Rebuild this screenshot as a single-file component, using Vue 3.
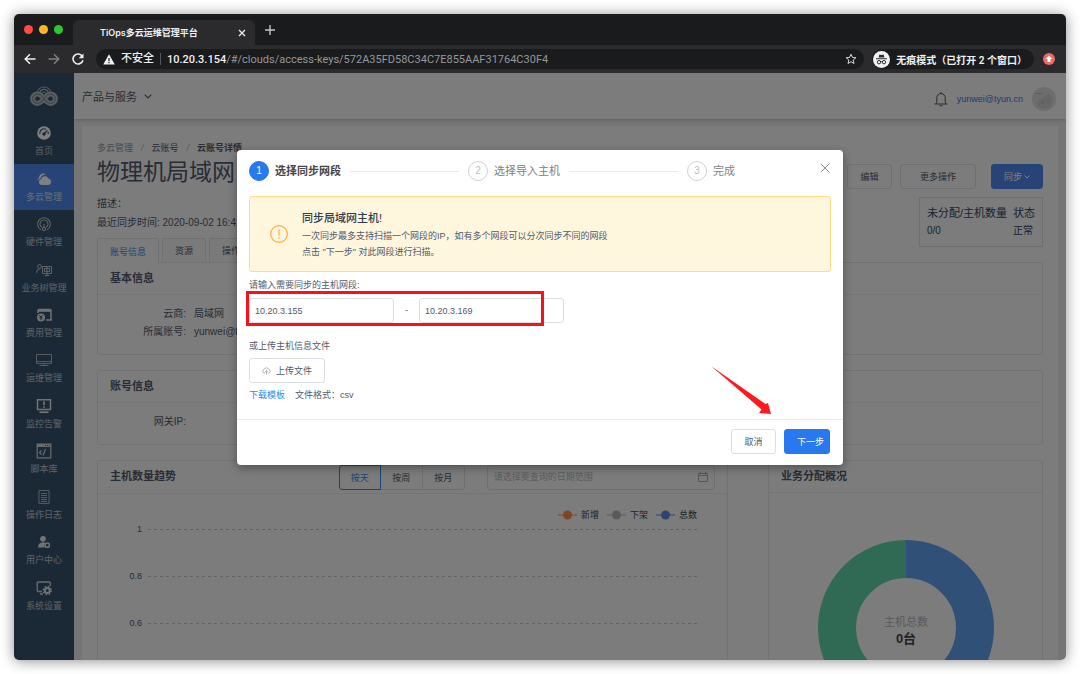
<template>
    <div class="desktop">
        <div class="window">
            <div class="tab-strip">
                <div class="lights">
                    <span class="light red"></span>
                    <span class="light yellow"></span>
                    <span class="light green"></span>
                </div>
                <div class="browser-tab">
                    <span class="tab-title">TiOps多云运维管理平台</span>
                    <button class="plain" aria-label="关闭标签页">
                        <svg width="8" height="8" viewBox="0 0 8 8"><path d="M1 1l6 6M7 1L1 7" stroke="#e8e8ea" stroke-width="1.4" /></svg>
                    </button>
                </div>
                <button class="plain" aria-label="新标签页">
                    <svg width="10" height="10" viewBox="0 0 10 10"><path d="M5 0v10M0 5h10" stroke="#c4c5c8" stroke-width="1.4" /></svg>
                </button>
            </div>
            <div class="toolbar">
                <div class="nav-buttons">
                    <button class="plain" aria-label="后退">
                        <svg width="12" height="12" viewBox="0 0 12 12"><path d="M11.5 6H1.5M6 1.2L1.2 6 6 10.8" fill="none" stroke="#f0f0f2" stroke-width="1.5" /></svg>
                    </button>
                    <button class="plain" aria-label="前进">
                        <svg width="12" height="12" viewBox="0 0 12 12"><path d="M.5 6h10M6 1.2L10.8 6 6 10.8" fill="none" stroke="#7d7e82" stroke-width="1.5" /></svg>
                    </button>
                    <button class="plain" aria-label="重新加载">
                        <svg width="12" height="12" viewBox="0 0 12 12"><path d="M10.2 3.2A5 5 0 1 0 10.9 7.2" fill="none" stroke="#f0f0f2" stroke-width="1.6" /><path d="M11.5.5v4.8H6.7z" fill="#f0f0f2" /></svg>
                    </button>
                </div>
                <div class="omnibox">
                    <svg width="12" height="11" viewBox="0 0 12 11"><path d="M6 .3L11.8 10.6H.2z" fill="#f0f0f2" /><path d="M6 4v3.2M6 8v1.3" stroke="#1a1b1d" stroke-width="1.2" /></svg>
                    <span class="unsafe">不安全</span>
                    <span class="url"><b>10.20.3.154</b>/#/clouds/access-keys/572A35FD58C34C7E855AAF31764C30F4</span>
                    <button class="plain" aria-label="收藏">
                        <svg width="12" height="12" viewBox="0 0 12 12"><path d="M6 1.2l1.4 3.2 3.5.3-2.7 2.3.8 3.5L6 8.7l-3 1.8.8-3.5L1.1 4.7l3.5-.3z" fill="none" stroke="#d5d6d9" stroke-width="1" /></svg>
                    </button>
                </div>
                <div class="incognito">
                    <svg width="17" height="17" viewBox="0 0 17 17">
                        <circle cx="8.5" cy="8.5" r="8.5" fill="#f1f3f4" />
                        <path d="M5.6 6.6l.8-3.2 2.1.5 2.1-.5.8 3.2zM3 7.2h11v1H3z" fill="#2b2c2f" />
                        <g fill="none" stroke="#2b2c2f"><circle cx="6" cy="11.2" r="1.7" /><circle cx="11" cy="11.2" r="1.7" /><path d="M7.7 10.9q.8-.6 1.6 0" /></g>
                    </svg>
                    <span>无痕模式（已打开 2 个窗口）</span>
                </div>
                <button class="plain" aria-label="更新">
                    <svg width="12" height="12" viewBox="0 0 12 12"><circle cx="6" cy="6" r="6" fill="#ed6a63" /><path d="M6 2.5l3.3 3.4H7.5v3h-3v-3H2.7z" fill="#fff" /></svg>
                </button>
            </div>

            <div class="app">
                <aside class="sidebar">
                    <a class="logo" href="#" aria-label="TiOps">
                        <svg width="28" height="20" viewBox="0 0 28 20" fill="none" stroke="#b4bbc1">
                            <path d="M7.5 6.500C8 3 11 1 14 1s6 2 6.500 5.500" stroke-width="1.2" />
                            <path d="M9.700 6.800C10.200 4.500 12 3.300 14 3.300s3.800 1.200 4.300 3.500" stroke-width="1.2" />
                            <path d="M11.800 7.500Q14 4.500 16.200 7.500" stroke-width="1.2" />
                            <path d="M14 12.500C11.500 9.500 9.700 8 7.300 8a4.700 4.700 0 1 0 0 9.400c5.400 0 8-9.400 13.400-9.400a4.700 4.700 0 1 1 0 9.400C18.300 17.400 16.500 15.900 14 12.900" stroke-width="5" />
                            <path d="M14 12.500C11.500 9.500 9.700 8 7.300 8a4.700 4.700 0 1 0 0 9.400c5.400 0 8-9.400 13.400-9.400a4.700 4.700 0 1 1 0 9.400C18.300 17.400 16.500 15.900 14 12.900" stroke="#6b8092" stroke-width="1" />
                        </svg>
                    </a>
                    <nav class="menu">
                        <a v-for="item in menu" :key="item.label" href="#" class="menu-item" :class="{ active: item.active }">
                            <svg width="16" height="16" viewBox="0 0 16 16" v-html="item.icon"></svg>
                            <span>{{ item.label }}</span>
                        </a>
                    </nav>
                </aside>

                <div class="page">
                    <header class="topbar">
                        <button class="plain products">
                            产品与服务
                            <svg width="8" height="5" viewBox="0 0 8 5"><path d="M.7.7L4 4 7.300.7" fill="none" stroke="#5a6070" stroke-width="1.200" /></svg>
                        </button>
                        <div class="user">
                            <button class="plain" aria-label="通知">
                                <svg width="14" height="16" viewBox="0 0 14 16"><path d="M.5 13h13M2 13q.8-1.500.8-3V6.800a4.200 4.200 0 0 1 8.400 0V10q0 1.500.8 3M7 2.500V1M5.500 14.800h3" fill="none" stroke="#50565f" stroke-width="1" /></svg>
                            </button>
                            <a href="#">yunwei@tyun.cn</a>
                            <svg width="24" height="24" viewBox="0 0 24 24"><circle cx="12" cy="12" r="12" fill="#dcdcdc" /><path d="M3 6.500h7" stroke="#b8b8b8" /><path d="M5 16c1-5 5-4 7-6 2-3 6-3 8 0 2 4 0 9-4 11-5 1-10 0-11-5z" fill="#d0d0d0" /><circle cx="11" cy="15" r="2" fill="#c6c6c6" /><circle cx="17" cy="14" r="2" fill="#c6c6c6" /></svg>
                        </div>
                    </header>

                    <main class="content">
                        <div class="summary">
                            <div class="summary-main">
                                <div class="breadcrumb">
                                    <a href="#" class="faint">多云管理</a><i>/</i><a href="#">云账号</a><i>/</i><b>云账号详情</b>
                                </div>
                                <h1>物理机局域网</h1>
                                <p>描述：</p>
                                <p>最近同步时间: 2020-09-02 16:41</p>
                            </div>
                            <div class="summary-side">
                                <div class="actions">
                                    <button class="btn">编辑</button>
                                    <button class="btn wide">更多操作</button>
                                    <button class="btn primary sync">
                                        同步
                                        <svg width="6" height="4" viewBox="0 0 6 4"><path d="M.5.5L3 3 5.500.5" fill="none" stroke="#fff" /></svg>
                                    </button>
                                </div>
                                <dl class="stats">
                                    <div><dt>未分配/主机数量</dt><dd>0/0</dd></div>
                                    <div><dt>状态</dt><dd>正常</dd></div>
                                </dl>
                            </div>
                        </div>

                        <div class="tabs">
                            <button v-for="(tab, index) in tabs" :key="tab" class="tab" :class="{ active: index === 0 }">{{ tab }}</button>
                        </div>
                        <section class="card first">
                            <h2>基本信息</h2>
                            <div class="fields">
                                <div class="field"><span>云商:</span><span>局域网</span></div>
                                <div class="field"><span>所属账号:</span><span>yunwei@tyun.cn</span></div>
                            </div>
                        </section>
                        <section class="card">
                            <h2>账号信息</h2>
                            <div class="fields">
                                <div class="field"><span>网关IP:</span><span></span></div>
                            </div>
                        </section>

                        <div class="charts">
                            <section class="card">
                                <div class="card-head">
                                    <h2>主机数量趋势</h2>
                                    <div class="periods">
                                        <button v-for="(period, index) in periods" :key="period" class="period" :class="{ active: index === 0 }">{{ period }}</button>
                                    </div>
                                    <label class="date">
                                        <input type="text" placeholder="请选择要查询的日期范围" aria-label="日期范围">
                                        <svg width="10" height="10" viewBox="0 0 10 10"><path d="M.5 1.500h9v8h-9zM.5 3.500h9M2.500 0v2M7.500 0v2" fill="none" stroke="#a9adb5" /></svg>
                                    </label>
                                </div>
                                <div class="legend">
                                    <span v-for="item in legend" :key="item.label">
                                        <svg width="19" height="10" viewBox="0 0 19 10"><path d="M0 5h19" :stroke="item.color" stroke-width="1.400" opacity=".7" /><circle cx="9.500" cy="5" r="4.500" :fill="item.color" /></svg>
                                        {{ item.label }}
                                    </span>
                                </div>
                                <div v-for="tick in ticks" :key="tick" class="tick">
                                    <span>{{ tick }}</span>
                                    <div class="dash"></div>
                                </div>
                            </section>
                            <section class="card">
                                <h2>业务分配概况</h2>
                                <svg class="donut" width="176" height="176" viewBox="0 0 176 176">
                                    <path d="M88 19a69 69 0 0 1 0 138" fill="none" stroke="#60a0ee" stroke-width="38" />
                                    <path d="M88 157a69 69 0 0 1 0-138" fill="none" stroke="#60d2a8" stroke-width="38" />
                                    <text class="donut-label" x="88" y="86">主机总数</text>
                                    <text class="donut-value" x="88" y="103">0台</text>
                                </svg>
                            </section>
                        </div>
                    </main>
                </div>

                <div class="mask">
                    <div class="modal" role="dialog" aria-label="同步局域网主机">
                        <div class="modal-head">
                            <ol class="steps">
                                <li v-for="(step, index) in steps" :key="step" :class="{ active: index === 0 }">
                                    <span class="num">{{ index + 1 }}</span>
                                    <span class="step-title">{{ step }}</span>
                                </li>
                            </ol>
                            <button class="plain close" aria-label="关闭">
                                <svg width="10" height="10" viewBox="0 0 10 10"><path d="M.7.7l8.600 8.600M9.300.7L.7 9.300" stroke="#8c8c8c" stroke-width="1" /></svg>
                            </button>
                        </div>
                        <div class="modal-body">
                            <div class="notice">
                                <svg width="18" height="18" viewBox="0 0 18 18"><circle cx="9" cy="9" r="8.300" fill="none" stroke="#ffab3d" stroke-width="1.200" /><path d="M9 4.500v6.200M9 12v1.500" stroke="#ffab3d" stroke-width="1.200" /></svg>
                                <div>
                                    <strong>同步局域网主机!</strong>
                                    <p>一次同步最多支持扫描一个网段的IP，如有多个网段可以分次同步不同的网段</p>
                                    <p>点击 "下一步" 对此网段进行扫描。</p>
                                </div>
                            </div>
                            <label class="label" for="range-start">请输入需要同步的主机网段:</label>
                            <div class="range">
                                <input id="range-start" v-model="rangeStart" type="text">
                                <span>-</span>
                                <input v-model="rangeEnd" type="text" aria-label="结束IP">
                                <div class="highlight"></div>
                            </div>
                            <div class="label upload-label">或上传主机信息文件</div>
                            <button class="btn upload">
                                <svg width="9" height="8" viewBox="0 0 9 8" fill="none" stroke="#9a9faa" stroke-width=".8"><path d="M3 6H2.200A1.700 1.700 0 0 1 2 2.700a2.600 2.600 0 0 1 5 0A1.700 1.700 0 0 1 6.800 6H6M4.500 7.500V3.500M3.200 4.800l1.300-1.300 1.300 1.300" /></svg>
                                上传文件
                            </button>
                            <div class="hint"><a href="#">下载模板</a><span>文件格式：csv</span></div>
                        </div>
                        <div class="modal-foot">
                            <button class="btn">取消</button>
                            <button class="btn primary next">下一步</button>
                        </div>
                        <svg class="arrow" width="60" height="48" viewBox="0 0 60 48"><path d="M0 0L54.500 38 57 37 60 48 48 47 50.500 43.500z" fill="#ff1a1f" /></svg>
                    </div>
                </div>
            </div>
        </div>
    </div>
</template>

<script setup>
    import {ref} from "vue"

    const rangeStart = ref("10.20.3.155")

    const rangeEnd = ref("10.20.3.169")

    const steps = ["选择同步网段", "选择导入主机", "完成"]

    const tabs = ["账号信息", "资源", "操作日志"]

    const periods = ["按天", "按周", "按月"]

    const ticks = ["1", "0.8", "0.6"]

    const legend = [
        { label: "新增", color: "#ff8a4c" },
        { label: "下架", color: "#b4b4b4" },
        { label: "总数", color: "#5b86e0" }
    ]

    const menu = [
        { label: "首页", icon: '<circle cx="8" cy="8" r="6.800" fill="#fff"/><path d="M3.800 9A4.300 4.300 0 0 1 10 4.300M12 6.800A4.300 4.300 0 0 1 12.200 9" fill="none" stroke="#36536f" stroke-width="1.200"/><circle cx="8" cy="9" r="1.700" fill="#36536f"/><path d="M8 9l3.300-3.600" stroke="#36536f" stroke-width="1.300"/>' },
        { label: "多云管理", active: true, icon: '<path d="M5.500 14a3 3 0 0 1-.3-5.900 3.800 3.800 0 0 1 7.200-.5A3.300 3.300 0 0 1 12.800 14z" fill="#fff"/><path d="M1.500 9.500Q.8 7.500 3 7 3.300 3.200 6.500 2.500q2-.3 3.300 1Q5.500 3.800 4.500 7.200 2.500 8 1.500 9.500z" fill="#fff"/>' },
        { label: "硬件管理", icon: '<g fill="none" stroke="#c0c5ca" stroke-width="1.100"><path d="M5 13.800a6.400 6.400 0 1 1 6 0"/><path d="M5.700 11.300a4 4 0 1 1 4.600 0"/><circle cx="8" cy="13" r="1.600"/><path d="M8 8v3.500"/></g>' },
        { label: "业务树管理", icon: '<g fill="none" stroke="#c0c5ca"><circle cx="3.500" cy="4.500" r="1.900"/><path d="M.5 11q0-4 3.500-4.300M6.500 4.500h9v7h-9zM8.500 6.500h5v3h-5zM11 5v6M9 13.500h4M11 11.500v2"/></g>' },
        { label: "费用管理", icon: '<path d="M2 6V3.500Q2 2.500 3 2.500h11q1 0 1 1v9.500H10" fill="none" stroke="#e2e4e6" stroke-width="1.500"/><path d="M2 2.500h13v2.300H2z" fill="#e2e4e6"/><circle cx="5" cy="10.500" r="4" fill="#e2e4e6"/><path d="M3.300 8.200L5 10.200l1.700-2M5 10.200v3M3.500 10.800h3" fill="none" stroke="#36536f"/>' },
        { label: "运维管理", icon: '<path d="M.5 2.500h15v9H.5zM.5 9.500h15M8 11.500v2M3.500 13.500h9" fill="none" stroke="#aeb5bb"/>' },
        { label: "监控告警", icon: '<path d="M1.500 1.800h13v9.700h-13z" fill="none" stroke="#e2e4e6" stroke-width="1.500"/><path d="M8 3.600v3.600M8 8.300v1.500" stroke="#e2e4e6" stroke-width="1.700"/><path d="M3.500 14.200h9" stroke="#e2e4e6" stroke-width="1.700"/>' },
        { label: "脚本库", icon: '<path d="M1.200 1.200h13.600v13.600H1.200z" fill="none" stroke="#d3d7da" stroke-width="1.200"/><path d="M1 1h14v3H1z" fill="#d3d7da"/><path d="M9 2.500h1M11 2.500h1M13 2.500h1" stroke="#36536f"/><path d="M5.500 7.500l-2 2 2 2M9.500 6L7 12.500" fill="none" stroke="#d3d7da" stroke-width="1.200"/>' },
        { label: "操作日志", icon: '<path d="M3 1.500h10v13H3zM5 4.500h6M5 6.500h6M5 8.500h6M5 10.500h6M5 12.500h6" fill="none" stroke="#aeb5bb"/>' },
        { label: "用户中心", icon: '<circle cx="7" cy="4.800" r="2.900" fill="#e2e4e6"/><path d="M2 13.500q0-5 5-5.200 1.500 0 2.300.6-1.600 2-.6 4.600z" fill="#e2e4e6"/><circle cx="11.300" cy="11.200" r="2.100" fill="none" stroke="#e2e4e6" stroke-width="1.500"/>' },
        { label: "系统设置", icon: '<path d="M6 11.500H2.500Q1.200 11.500 1.200 10.200V3.300Q1.200 2 2.500 2h10.500q1.300 0 1.300 1.300V6M4 14h3" fill="none" stroke="#d3d7da" stroke-width="1.300"/><circle cx="11.300" cy="10.500" r="2.500" fill="none" stroke="#e2e4e6" stroke-width="2"/><circle cx="11.300" cy="10.500" r="4" fill="none" stroke="#e2e4e6" stroke-width="1.400" stroke-dasharray="1.600 1.540"/>' }
    ]
</script>

<style>
    body {
        background: #FFFFFF;
    }
</style>

<style scoped>
    * {
        box-sizing: border-box;
    }
    .desktop {
        height: 100vh;
        padding: 14px;
        font-family: "Liberation Sans", "Noto Sans CJK SC", sans-serif;
        font-size: 9px;
        color: #515a6e;
    }
    button, input {
        font: inherit;
        color: inherit;
    }
    a {
        color: #2d8cf0;
        text-decoration: none;
    }
    h1, h2, p, dl, dd, ol {
        margin: 0;
        padding: 0;
    }
    svg {
        flex: none;
        display: block;
    }
    .plain {
        display: flex;
        align-items: center;
        border: 0;
        padding: 0;
        background: none;
        cursor: pointer;
    }
    .window {
        height: 100%;
        display: flex;
        flex-direction: column;
        border-radius: 5px;
        overflow: hidden;
        box-shadow: 0 1px 14px rgba(0, 0, 0, 0.45);
    }

    .tab-strip {
        flex: none;
        height: 31px;
        display: flex;
        align-items: center;
        gap: 10px;
        padding-left: 10px;
        background: #1a1b1d;
    }
    .lights {
        display: flex;
        gap: 6px;
    }
    .light {
        width: 9px;
        height: 9px;
        border-radius: 50%;
    }
    .red {
        background: #ff4a48;
    }
    .yellow {
        background: #ffb527;
    }
    .green {
        background: #29c732;
    }
    .browser-tab {
        align-self: flex-end;
        width: 182px;
        height: 25px;
        display: flex;
        align-items: center;
        justify-content: space-between;
        padding: 0 9px 0 27px;
        border-radius: 6px 6px 0 0;
        background: #2b2b2e;
        color: #f0f0f2;
        font-family: Inter, "Noto Sans CJK SC", sans-serif;
        font-weight: 600;
    }
    .toolbar {
        flex: none;
        height: 28px;
        display: flex;
        align-items: center;
        gap: 8px;
        padding: 0 11px 0 10px;
        background: #2b2b2e;
        color: #f0f0f2;
        font-family: Roboto, "Noto Sans CJK SC", sans-serif;
        font-weight: 500;
    }
    .nav-buttons {
        display: flex;
        gap: 12px;
        padding-right: 4px;
    }
    .omnibox {
        flex: 1;
        height: 20px;
        display: flex;
        align-items: center;
        gap: 6px;
        padding: 0 7px;
        border-radius: 10px;
        background: #1a1b1d;
        font-size: 11px;
    }
    .unsafe {
        padding-right: 6px;
        border-right: 1px solid #55565a;
        line-height: 12px;
    }
    .url {
        flex: 1;
        color: #96979b;
        font-weight: 400;
    }
    .url b {
        color: #f0f0f2;
        font-weight: 500;
    }
    .incognito {
        height: 20px;
        display: flex;
        align-items: center;
        gap: 6px;
        padding: 0 7px 0 1px;
        margin-right: 1px;
        border-radius: 10px;
        background: #1a1b1d;
        font-size: 10px;
        font-weight: 600;
        white-space: nowrap;
    }

    .app {
        position: relative;
        flex: 1;
        min-height: 0;
        display: flex;
        background: #ebebeb;
    }
    .sidebar {
        flex: none;
        width: 60px;
        background: #36536f;
    }
    .logo {
        height: 46px;
        display: flex;
        align-items: center;
        justify-content: center;
    }
    .menu {
        min-height: 500px;
        display: grid;
        grid-auto-rows: 1fr;
    }
    .menu-item {
        display: flex;
        flex-direction: column;
        align-items: center;
        justify-content: center;
        gap: 3px;
        color: #c0c5ca;
        line-height: 14px;
        white-space: nowrap;
    }
    .menu-item.active {
        background: #5089ec;
        color: #d5dff0;
    }
    .page {
        flex: 1;
        min-width: 0;
        display: flex;
        flex-direction: column;
        overflow: hidden;
    }
    .topbar {
        flex: none;
        height: 46px;
        display: flex;
        align-items: center;
        justify-content: space-between;
        padding: 0 10px 0 8px;
        background: #f8f8f8;
        box-shadow: 0 1px 3px rgba(0, 0, 0, 0.2);
    }
    .products {
        gap: 7px;
        font-size: 11px;
    }
    .user {
        display: flex;
        align-items: center;
        gap: 9px;
        padding-top: 6px;
    }
    .user a {
        color: #3a78d8;
    }
    .content {
        flex: 1;
        min-height: 0;
        margin: 7px 8px 0;
        padding: 16px 15px 0;
        background: #f8f8f8;
        overflow: hidden;
    }
    .summary {
        display: flex;
        justify-content: space-between;
    }
    .breadcrumb {
        line-height: 12px;
    }
    .breadcrumb a {
        color: #515a6e;
    }
    .breadcrumb .faint {
        color: #8f949e;
    }
    .breadcrumb i {
        margin: 0 8px;
        color: #b0b4bb;
    }
    .breadcrumb b {
        font-weight: 600;
    }
    h1 {
        margin-bottom: 4px;
        font-size: 23px;
        font-weight: 400;
        line-height: 36px;
    }
    .summary-main p {
        font-size: 10px;
        line-height: 19px;
    }
    .summary-main p:last-child {
        margin-bottom: 6px;
    }
    .summary-side {
        display: flex;
        flex-direction: column;
        align-items: flex-end;
        gap: 8px;
        margin-bottom: -10px;
        padding-top: 22px;
    }
    .actions {
        display: flex;
        gap: 8px;
    }
    .btn {
        height: 25px;
        min-width: 45px;
        padding: 0 12px;
        border: 1px solid #dcdee2;
        border-radius: 3px;
        background: transparent;
        cursor: pointer;
    }
    .btn.wide {
        min-width: 76px;
    }
    .btn.primary {
        border-color: #2878f0;
        background: #2878f0;
        color: #FFFFFF;
    }
    .btn.sync {
        min-width: 52px;
        display: flex;
        align-items: center;
        justify-content: center;
        gap: 2px;
        margin-left: 7px;
        border-color: #5089ec;
        background: #5089ec;
    }
    .stats {
        display: flex;
        gap: 6px;
        padding: 7px;
        border: 1px solid #dcdee2;
        color: #36465c;
    }
    .stats dt {
        font-size: 11px;
        line-height: 17px;
    }
    .stats dd {
        font-size: 10px;
        line-height: 17px;
    }
    .tabs {
        display: flex;
        gap: 3px;
    }
    .tab {
        height: 24px;
        padding: 0 12px;
        border: 1px solid #e0e0e0;
        border-bottom: 0;
        border-radius: 3px 3px 0 0;
        background: #f4f4f4;
        cursor: pointer;
    }
    .tab.active {
        position: relative;
        height: 25px;
        margin-bottom: -1px;
        background: #f8f8f8;
        color: #2d8cf0;
    }
    .card {
        margin-bottom: 15px;
        border: 1px solid #e4e5e7;
        border-radius: 3px;
    }
    .card.first {
        border-radius: 0 3px 3px 3px;
    }
    h2 {
        height: 32px;
        padding: 0 12px;
        border-bottom: 1px solid #e8eaec;
        font-size: 11px;
        font-weight: 600;
        line-height: 31px;
    }
    .fields {
        padding: 10px 0 13px;
    }
    .field {
        display: flex;
        gap: 8px;
        font-size: 10px;
        line-height: 18px;
    }
    .field span:first-child {
        width: 88px;
        text-align: right;
    }
    .charts {
        display: grid;
        grid-template-columns: 631fr 275fr;
        gap: 40px;
    }
    .charts .card {
        min-height: 260px;
    }
    .card-head {
        display: flex;
        align-items: center;
        padding-right: 12px;
        border-bottom: 1px solid #e8eaec;
    }
    .card-head h2 {
        flex: 1;
        border: 0;
    }
    .periods {
        display: flex;
        margin-right: 22px;
    }
    .period {
        width: 42px;
        height: 25px;
        padding: 0;
        border: 1px solid #dcdee2;
        border-left-width: 0;
        background: transparent;
        cursor: pointer;
    }
    .period:last-child {
        border-radius: 0 3px 3px 0;
    }
    .period.active {
        border: 1px solid #2d8cf0;
        border-radius: 3px 0 0 3px;
        color: #2d8cf0;
    }
    .date {
        width: 37%;
        height: 25px;
        display: flex;
        align-items: center;
        padding: 0 6px;
        border: 1px solid #dcdee2;
        border-radius: 3px;
    }
    .date input {
        flex: 1;
        min-width: 0;
        border: 0;
        padding: 0;
        background: none;
        outline: none;
    }
    .date input::placeholder {
        color: #b4b8c0;
    }
    .legend {
        display: flex;
        justify-content: flex-end;
        gap: 8px;
        padding: 14px 30px 0 0;
        line-height: 14px;
    }
    .legend span {
        display: flex;
        align-items: center;
        gap: 4px;
        color: #464646;
    }
    .tick {
        display: flex;
        align-items: center;
        gap: 6px;
        height: 14px;
        margin-bottom: 33px;
        padding-right: 30px;
    }
    .tick span {
        width: 44px;
        text-align: right;
    }
    .dash {
        flex: 1;
        height: 1px;
        background: repeating-linear-gradient(90deg, #c4c4c4 0 3px, transparent 3px 6px);
    }
    .donut {
        margin: 47px auto 0;
    }
    .donut text {
        text-anchor: middle;
    }
    .donut-label {
        font-size: 11px;
        fill: #b4b4b4;
    }
    .donut-value {
        font-size: 13px;
        font-weight: 600;
        fill: #464646;
    }

    .mask {
        position: absolute;
        inset: 0;
        display: flex;
        align-items: flex-start;
        justify-content: center;
        padding-top: 77px;
        background: rgba(0, 0, 0, 0.5);
    }
    .modal {
        position: relative;
        width: 58%;
        max-width: 606px;
        border-radius: 4px;
        background: #FFFFFF;
        box-shadow: 0 3px 10px rgba(0, 0, 0, 0.35);
    }
    .modal-head {
        display: flex;
        align-items: flex-start;
        justify-content: space-between;
        padding: 11px 12px 15px;
    }
    .steps {
        width: 486px;
        display: flex;
        gap: 9px;
        list-style: none;
    }
    .steps li {
        flex: 1;
        display: flex;
        align-items: center;
        gap: 6px;
        color: #808080;
        font-size: 11px;
        line-height: 20px;
        white-space: nowrap;
    }
    .steps li:last-child {
        flex: none;
    }
    .steps li:not(:last-child)::after {
        content: "";
        flex: 1;
        height: 1px;
        margin-left: 3px;
        background: #e8eaec;
    }
    .num {
        width: 20px;
        height: 20px;
        border: 1px solid #d0d0d0;
        border-radius: 50%;
        color: #c0c0c0;
        font-size: 10px;
        line-height: 18px;
        text-align: center;
    }
    .steps .active {
        color: #464646;
        font-weight: 600;
    }
    .active .num {
        border-color: #2878f0;
        background: #2878f0;
        color: #FFFFFF;
        font-weight: 400;
    }
    .close {
        margin: 2px 1px 0;
    }
    .modal-body {
        padding: 0 12px 16px;
    }
    .notice {
        display: flex;
        align-items: center;
        gap: 14px;
        padding: 11px 20px;
        border: 1px solid #ffdb85;
        border-radius: 3px;
        background: #fff6de;
    }
    .notice strong {
        display: block;
        color: #303a4c;
        font-size: 11px;
        font-weight: 500;
        line-height: 20px;
    }
    .notice p {
        line-height: 16px;
    }
    .label {
        display: block;
        line-height: 26px;
    }
    .range {
        position: relative;
        display: flex;
        width: 315px;
    }
    .range input {
        width: 145px;
        height: 25px;
        padding: 0 5px;
        border: 1px solid #dcdee2;
        border-radius: 3px;
        background: #FFFFFF;
        outline: none;
    }
    .range span {
        flex: 1;
        line-height: 25px;
        text-align: center;
    }
    .highlight {
        position: absolute;
        inset: -7px 20px -3px -3px;
        border: 3px solid #f5121d;
        pointer-events: none;
    }
    .upload-label {
        margin-top: 12px;
        line-height: 23px;
    }
    .upload {
        display: flex;
        align-items: center;
        gap: 5px;
    }
    .hint {
        display: flex;
        gap: 10px;
        margin-top: 4px;
        line-height: 16px;
    }
    .modal-foot {
        display: flex;
        justify-content: flex-end;
        gap: 8px;
        padding: 9px 13px 11px;
        border-top: 1px solid #e8eaec;
    }
    .btn.next {
        padding: 0 5px 0 12px;
    }
    .arrow {
        position: absolute;
        right: 72px;
        bottom: 51px;
    }
</style>
